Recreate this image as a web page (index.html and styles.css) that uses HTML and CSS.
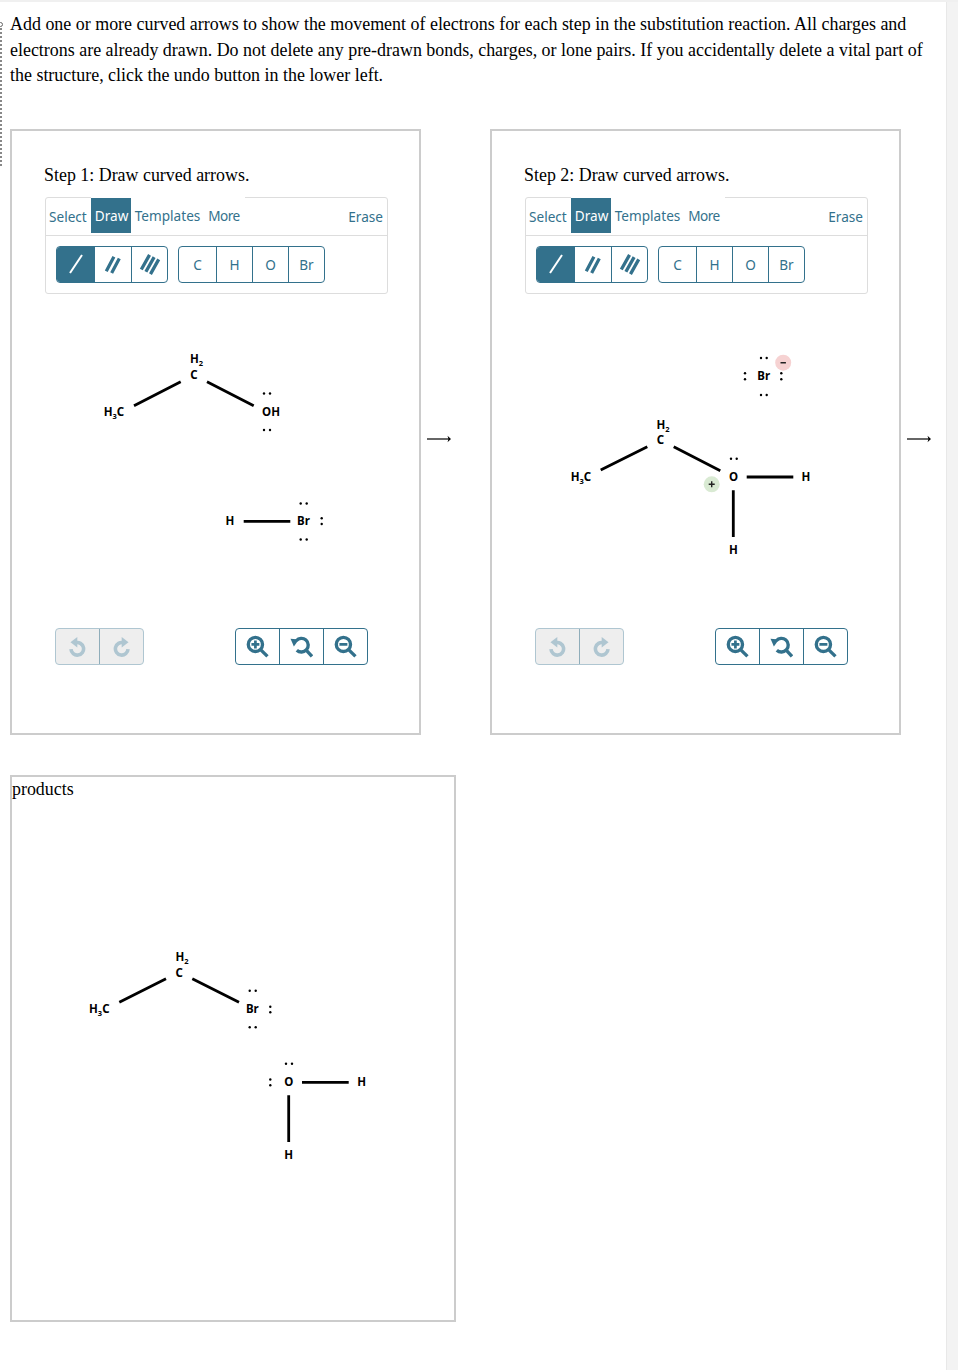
FILE: index.html
```html
<!DOCTYPE html>
<html lang="en">
<head>
    <meta charset="UTF-8">
    <title>Draw curved arrows</title>
    <link rel="stylesheet" href="styles.css">
</head>
<body>
    <div class="side-ring"></div>
    <div class="side-dots"></div>
    <div class="scroll-track"></div>
    <div class="page">
        <p class="question">Add one or more curved arrows to show the movement of electrons for each step in the substitution reaction. All charges and electrons are already drawn. Do not delete any pre-drawn bonds, charges, or lone pairs. If you accidentally delete a vital part of the structure, click the undo button in the lower left.</p>

        <svg width="0" height="0" class="defs">
            <defs>
                <g id="ico-zoom-in"><circle cx="9" cy="9" r="6.800" fill="none" stroke-width="3.200"/><path d="M14 14l6.500 6.500" stroke-width="3.200" fill="none"/><path d="M9 5.200v7.600M5.200 9h7.600" stroke-width="2.600" fill="none"/></g>
                <g id="ico-zoom-out"><circle cx="9" cy="9" r="6.800" fill="none" stroke-width="3.200"/><path d="M14 14l6.500 6.500" stroke-width="3.200" fill="none"/><path d="M5.200 9h7.600" stroke-width="2.600" fill="none"/></g>
                <g id="ico-zoom-reset"><path d="M6 5.500A6.500 6.500 0 1 1 6.500 14.500" fill="none" stroke-width="3.200"/><path d="M0.500 3.500l8 0.800-4.800 6.700z" stroke="none" class="ico-fill"/><path d="M15.500 14.500l5.500 6" stroke-width="3.200" fill="none"/></g>
                <g id="ico-undo"><path d="M7 6.500a6 6 0 1 1-4.200 6" fill="none" stroke-width="3.400"/><path d="M8.800 1v10l-6.500-5z" stroke="none" class="ico-fill"/></g>
                <g id="ico-redo"><path d="M11 6.500a6 6 0 1 0 4.200 6" fill="none" stroke-width="3.400"/><path d="M9.200 1v10l6.500-5z" stroke="none" class="ico-fill"/></g>
            </defs>
        </svg>

        <div class="steps">
            <div class="panel">
                <div class="step-title">Step 1: Draw curved arrows.</div>
                <div class="toolbar">
                    <div class="tabs">
                        <span class="tab">Select</span>
                        <div class="tab-group">
                            <span class="tab active">Draw</span>
                            <span class="tab">Templates</span>
                            <span class="tab more">More</span>
                        </div>
                        <span class="tab erase">Erase</span>
                    </div>
                    <div class="tools">
                        <div class="btn-group bonds">
                            <button class="active"><svg width="20" height="26" viewBox="0 0 20 26"><path d="M4 22L16 4"/></svg></button>
                            <button><svg width="18" height="24" viewBox="0 0 20 26"><path d="M2.500 21L11 5M8.500 23L17 7"/></svg></button>
                            <button><svg width="22" height="24" viewBox="0 0 24 26"><path d="M2.500 19L11.500 3M7.500 21.500L16.500 5.500M12.500 24L21.500 8"/></svg></button>
                        </div>
                        <div class="btn-group atoms">
                            <button>C</button><button>H</button><button>O</button><button>Br</button>
                        </div>
                    </div>
                </div>
                <svg class="canvas" width="343" height="334" viewBox="45 294 343 334">
                    <path class="bond" d="M134 405.700L180.700 381.700M207 381.700L253.700 405.700M243.700 521.300H290.300"/>
                    <text class="atom" x="114" y="415.500">H<tspan class="sub" dy="3">3</tspan><tspan dy="-3">C</tspan></text>
                    <text class="atom" x="196.500" y="363">H<tspan class="sub" dy="3">2</tspan></text>
                    <text class="atom" x="194" y="378.500">C</text>
                    <text class="atom" x="271" y="415.500">OH</text>
                    <text class="atom" x="303.500" y="525">Br</text>
                    <text class="atom" x="230" y="525">H</text>
                    <g class="dots">
                        <circle cx="264" cy="393.500" r="1.200"/><circle cx="270" cy="393.500" r="1.200"/>
                        <circle cx="264" cy="430" r="1.200"/><circle cx="270" cy="430" r="1.200"/>
                        <circle cx="300.700" cy="503.500" r="1.200"/><circle cx="306.700" cy="503.500" r="1.200"/>
                        <circle cx="300.700" cy="539.500" r="1.200"/><circle cx="306.700" cy="539.500" r="1.200"/>
                        <circle cx="321.700" cy="518.300" r="1.200"/><circle cx="321.700" cy="524" r="1.200"/>
                    </g>
                </svg>
                <div class="bottom-tools">
                    <div class="btn-group history">
                        <button><svg width="19" height="21" viewBox="0 0 18 20"><use href="#ico-undo"/></svg></button>
                        <button><svg width="19" height="21" viewBox="0 0 18 20"><use href="#ico-redo"/></svg></button>
                    </div>
                    <div class="btn-group zoom">
                        <button><svg width="23" height="23" viewBox="0 0 22 22"><use href="#ico-zoom-in"/></svg></button>
                        <button><svg width="23" height="23" viewBox="0 0 22 22"><use href="#ico-zoom-reset"/></svg></button>
                        <button><svg width="23" height="23" viewBox="0 0 22 22"><use href="#ico-zoom-out"/></svg></button>
                    </div>
                </div>
            </div>

            <div class="arrow-cell"><svg width="24" height="8" viewBox="0 0 24 8"><path d="M0 4H22" stroke="#000" stroke-width="1.200"/><path d="M20.500 0.800L24 4l-3.500 3.200L21.500 4z"/></svg></div>

            <div class="panel">
                <div class="step-title">Step 2: Draw curved arrows.</div>
                <div class="toolbar">
                    <div class="tabs">
                        <span class="tab">Select</span>
                        <div class="tab-group">
                            <span class="tab active">Draw</span>
                            <span class="tab">Templates</span>
                            <span class="tab more">More</span>
                        </div>
                        <span class="tab erase">Erase</span>
                    </div>
                    <div class="tools">
                        <div class="btn-group bonds">
                            <button class="active"><svg width="20" height="26" viewBox="0 0 20 26"><path d="M4 22L16 4"/></svg></button>
                            <button><svg width="18" height="24" viewBox="0 0 20 26"><path d="M2.500 21L11 5M8.500 23L17 7"/></svg></button>
                            <button><svg width="22" height="24" viewBox="0 0 24 26"><path d="M2.500 19L11.500 3M7.500 21.500L16.500 5.500M12.500 24L21.500 8"/></svg></button>
                        </div>
                        <div class="btn-group atoms">
                            <button>C</button><button>H</button><button>O</button><button>Br</button>
                        </div>
                    </div>
                </div>
                <svg class="canvas" width="343" height="334" viewBox="525 294 343 334">
                    <circle class="plus-bg" cx="711.700" cy="484.300" r="8"/>
                    <circle class="minus-bg" cx="783.200" cy="362.700" r="8"/>
                    <path class="charge" d="M708.700 484.300h6M711.700 481.300v6M780.500 362.700h5.400"/>
                    <path class="bond" d="M600.700 470L647.300 446.700M673.700 446.700L720.300 470.700M746.700 477H793.300M733.300 490.300V537"/>
                    <text class="atom" x="581" y="481">H<tspan class="sub" dy="3">3</tspan><tspan dy="-3">C</tspan></text>
                    <text class="atom" x="663" y="428.500">H<tspan class="sub" dy="3">2</tspan></text>
                    <text class="atom" x="660.500" y="444">C</text>
                    <text class="atom" x="733.500" y="481">O</text>
                    <text class="atom" x="806" y="481">H</text>
                    <text class="atom" x="733.500" y="554">H</text>
                    <text class="atom" x="763.700" y="380">Br</text>
                    <g class="dots">
                        <circle cx="731" cy="458.700" r="1.200"/><circle cx="736.700" cy="458.700" r="1.200"/>
                        <circle cx="761" cy="358" r="1.200"/><circle cx="766.700" cy="358" r="1.200"/>
                        <circle cx="761" cy="395" r="1.200"/><circle cx="766.700" cy="395" r="1.200"/>
                        <circle cx="745" cy="373.300" r="1.200"/><circle cx="745" cy="379.300" r="1.200"/>
                        <circle cx="781.300" cy="373.300" r="1.200"/><circle cx="781.300" cy="379.300" r="1.200"/>
                    </g>
                </svg>
                <div class="bottom-tools">
                    <div class="btn-group history">
                        <button><svg width="19" height="21" viewBox="0 0 18 20"><use href="#ico-undo"/></svg></button>
                        <button><svg width="19" height="21" viewBox="0 0 18 20"><use href="#ico-redo"/></svg></button>
                    </div>
                    <div class="btn-group zoom">
                        <button><svg width="23" height="23" viewBox="0 0 22 22"><use href="#ico-zoom-in"/></svg></button>
                        <button><svg width="23" height="23" viewBox="0 0 22 22"><use href="#ico-zoom-reset"/></svg></button>
                        <button><svg width="23" height="23" viewBox="0 0 22 22"><use href="#ico-zoom-out"/></svg></button>
                    </div>
                </div>
            </div>

            <div class="arrow-cell"><svg width="24" height="8" viewBox="0 0 24 8"><path d="M0 4H22" stroke="#000" stroke-width="1.200"/><path d="M20.500 0.800L24 4l-3.500 3.200L21.500 4z"/></svg></div>
        </div>

        <div class="products">
            <div class="products-title">products</div>
            <svg class="products-canvas" width="442" height="520" viewBox="12 800 442 520">
                <path class="bond" d="M119.300 1002.300L166 978.700M192.300 978.700L239 1002.300M302 1082.300H348.700M288.700 1095.300V1142"/>
                <text class="atom" x="99.300" y="1013">H<tspan class="sub" dy="3">3</tspan><tspan dy="-3">C</tspan></text>
                <text class="atom" x="182" y="961">H<tspan class="sub" dy="3">2</tspan></text>
                <text class="atom" x="179.300" y="977">C</text>
                <text class="atom" x="252.300" y="1013">Br</text>
                <text class="atom" x="288.700" y="1086">O</text>
                <text class="atom" x="361.700" y="1086">H</text>
                <text class="atom" x="288.700" y="1159">H</text>
                <g class="dots">
                    <circle cx="249.700" cy="990.700" r="1.200"/><circle cx="255.700" cy="990.700" r="1.200"/>
                    <circle cx="249.700" cy="1027.300" r="1.200"/><circle cx="255.700" cy="1027.300" r="1.200"/>
                    <circle cx="270.300" cy="1006.700" r="1.200"/><circle cx="270.300" cy="1012.300" r="1.200"/>
                    <circle cx="286" cy="1063.700" r="1.200"/><circle cx="292" cy="1063.700" r="1.200"/>
                    <circle cx="270.300" cy="1079.500" r="1.200"/><circle cx="270.300" cy="1085.300" r="1.200"/>
                </g>
            </svg>
        </div>
    </div>
</body>
</html>
```

FILE: styles.css
```css
html, body {
    margin: 0;
    padding: 0;
    background: #fff;
}
body {
    font-family: "Liberation Serif", "Times New Roman", serif;
    color: #000;
    height: 1370px;
    overflow: hidden;
    position: relative;
    border-top: 2px solid #f0f0f0;
    box-sizing: border-box;
}
/* clipped vertical label at the left edge */
.side-ring {
    position: absolute;
    left: -2px;
    top: 20px;
    width: 3px;
    height: 3px;
    border: 1px solid #666;
    border-radius: 50%;
}
.side-dots {
    position: absolute;
    left: 0;
    top: 26px;
    height: 138px;
    border-left: 2px dotted #888;
}
.scroll-track {
    position: absolute;
    top: -2px;
    right: 0;
    width: 11px;
    height: 1370px;
    background: #f3f3f3;
    border-left: 1px solid #e8e8e8;
}
.page {
    padding-left: 10px;
}
.question {
    margin: 0;
    padding-top: 10px;
    width: 925px;
    font-size: 17.940px;
    line-height: 25.500px;
}
.defs {
    position: absolute;
}
.steps {
    display: flex;
    align-items: flex-start;
    margin-top: 40px;
}
.panel {
    box-sizing: border-box;
    width: 411px;
    height: 606px;
    border: 2px solid #ccc;
    padding: 32px 31px 0 33px;
    flex: none;
}
.step-title {
    font-size: 17.920px;
    line-height: 24px;
    height: 34px;
    margin-left: -1px;
}
.toolbar {
    width: 343px;
    box-sizing: border-box;
    border: 1px solid #ddd;
    border-radius: 3px;
    font-family: "Noto Sans", "Open Sans", sans-serif;
}
.tabs {
    display: flex;
    height: 37px;
    border-bottom: 1px solid #ddd;
    font-size: 13.600px;
    color: #33718c;
}
.tab {
    padding: 0 4px 0 3px;
    line-height: 38px;
    height: 35px;
}
.tab-group {
    display: flex;
    width: 154px;
    height: 36px;
    margin: -1px 0 0 0;
    padding-top: 1px;
    background: #fff;
}
.tab-group .tab {
    padding: 0 4px;
    line-height: 36px;
}
.tab-group .more {
    letter-spacing: -0.600px;
}
.tab-group .active {
    box-sizing: border-box;
    width: 40px;
    padding: 0 0 0 4px;
    background: #33718c;
    color: #fff;
}
.tab.erase {
    margin-left: auto;
    margin-right: 1px;
    padding: 0 3px;
}
.tools {
    display: flex;
    gap: 10px;
    height: 57px;
    align-items: flex-start;
    padding: 10px 0 0 10px;
    box-sizing: border-box;
}
.btn-group {
    display: flex;
    border: 1px solid #33718c;
    border-radius: 4px;
    overflow: hidden;
    background: #fff;
}
.btn-group button {
    display: flex;
    align-items: center;
    justify-content: center;
    border: 0;
    padding: 0;
    background: transparent;
    color: #33718c;
    font-family: "Noto Sans", "Open Sans", sans-serif;
    font-size: 13.600px;
}
.btn-group button + button {
    border-left: 1px solid #33718c;
}
.bonds button {
    width: 37px;
    height: 35px;
}
.bonds button:last-child {
    width: 36px;
}
.bonds path {
    stroke: #33718c;
    stroke-width: 3.600px;
    fill: none;
}
.bonds .active {
    background: #33718c;
}
.bonds .active path {
    stroke: #fff;
    stroke-width: 2px;
}
.atoms button {
    width: 36px;
    height: 35px;
}
.atoms button:first-child {
    width: 37px;
}
.canvas {
    display: block;
}
.bottom-tools {
    display: flex;
    justify-content: space-between;
    padding: 0 20px 0 10px;
}
.history {
    border-color: #afc6d1;
    background: #eee;
}
.history button, .zoom button {
    width: 44px;
    height: 35px;
}
.history button:first-child, .zoom button:first-child {
    width: 43px;
}
.btn-group.history button + button {
    border-left-color: #8fadba;
}
.history svg {
    stroke: #afc6d1;
    color: #afc6d1;
}
.zoom svg {
    stroke: #33718c;
    color: #33718c;
}
.ico-fill {
    fill: currentColor;
}
.arrow-cell {
    width: 63px;
    height: 8px;
    padding: 306px 0 0 6px;
    flex: none;
}
.arrow-cell:last-child {
    width: 30px;
}
.arrow-cell svg {
    display: block;
}
.bond {
    stroke: #000;
    stroke-width: 2.800px;
    fill: none;
}
.atom {
    font-family: "Noto Sans", "Open Sans", sans-serif;
    font-size: 11.500px;
    font-weight: 700;
    text-anchor: middle;
    fill: #000;
}
.sub {
    font-size: 7.500px;
}
.dots {
    fill: #000;
}
.plus-bg {
    fill: #d9ead3;
}
.minus-bg {
    fill: #f6d2d2;
}
.charge {
    stroke: #222;
    stroke-width: 1.400px;
    fill: none;
}
.products {
    box-sizing: border-box;
    width: 446px;
    height: 547px;
    margin-top: 40px;
    border: 2px solid #ccc;
}
.products-title {
    font-size: 17.920px;
    line-height: 24px;
    height: 23px;
}
.products-canvas {
    display: block;
}
```
